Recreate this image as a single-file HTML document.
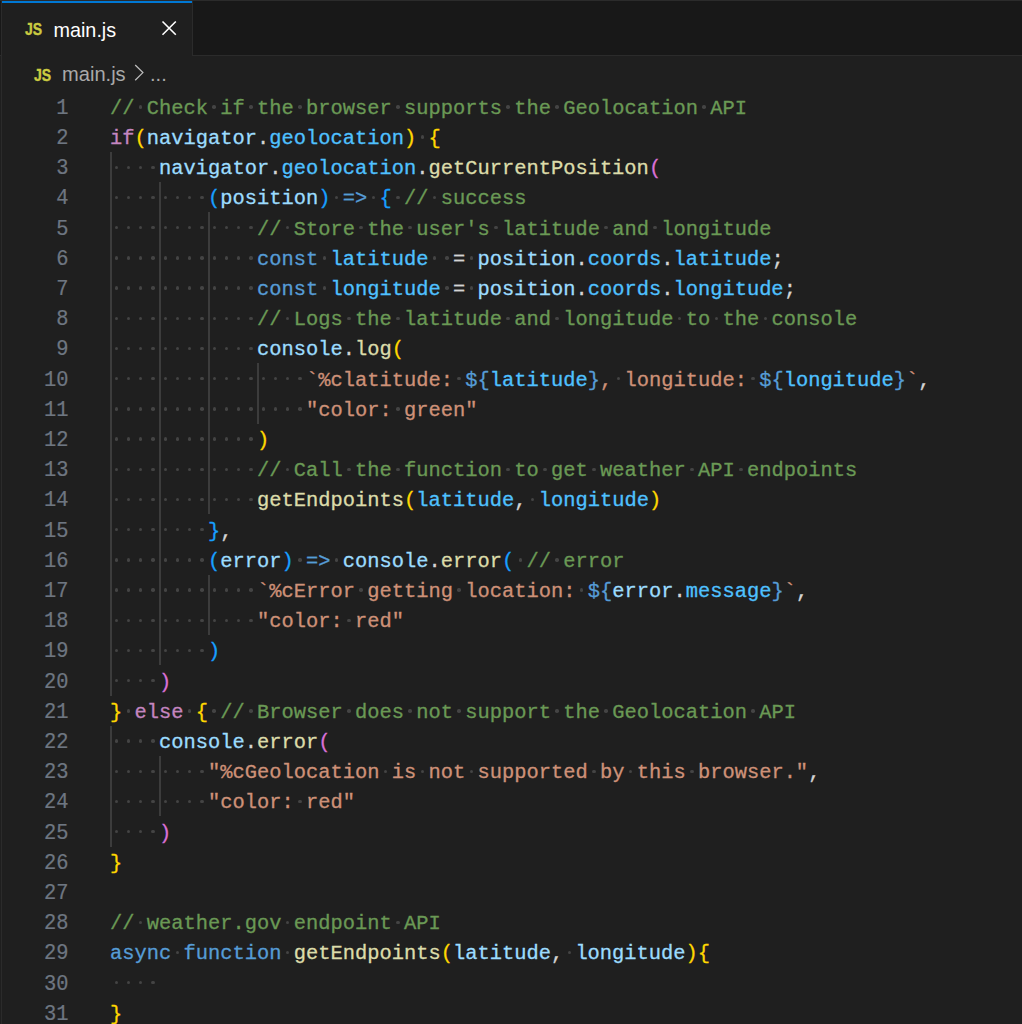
<!DOCTYPE html>
<html><head><meta charset="utf-8"><style>
html,body{margin:0;padding:0;}
body{width:1022px;height:1024px;overflow:hidden;background:#1f1f1f;position:relative;font-family:"Liberation Sans",sans-serif;}
.tabs{position:absolute;left:0;top:0;width:1022px;height:56px;background:#181818;}
.tabs .bt{position:absolute;left:0;top:0;width:1022px;height:1px;background:#2b2b2b}
.tabs .bb{position:absolute;left:0;top:55px;width:1022px;height:1px;background:#2b2b2b}
.lb{position:absolute;left:1px;top:0;width:1px;height:1024px;background:#2b2b2b}
.tab{position:absolute;left:2px;top:1px;width:190px;height:55px;background:#1f1f1f;}
.tab .blue{position:absolute;left:0;top:0;width:190px;height:2px;background:#0078d4}
.tab .rb{position:absolute;left:190px;top:0;width:1px;height:55px;background:#2b2b2b}
.js{position:absolute;font-family:"Liberation Sans",sans-serif;font-weight:bold;color:#cbcb41;}
.tt{position:absolute;color:#ffffff;font-size:19.8px;}
.bc{position:absolute;color:#a9a9a9;font-size:20.1px;}
.ln{position:absolute;left:0;height:30.2px;width:1022px;line-height:30.2px;font-family:"Liberation Mono",monospace;font-size:20.410px;white-space:pre;}
.ln b{position:absolute;right:953.5px;font-weight:normal;color:#6e7681;transform:scaleY(1.08);transform-origin:0 20px;-webkit-text-stroke:0.2px #6e7681;}
.code{position:absolute;left:110.0px;top:0;-webkit-text-stroke:0.3px currentColor;}
.code span{-webkit-text-stroke:0.3px currentColor;}
.code i{font-style:normal;position:relative;}
.code i::after{content:"";position:absolute;left:4.5px;top:8.4px;width:3.4px;height:3.4px;border-radius:50%;background:#444444;}
.gd{position:absolute;width:1.8px;background:#3c3c3c;}
.c{color:#6a9955} .k{color:#c586c0} .b{color:#569cd6} .v{color:#9cdcfe} .p{color:#4fc1ff} .f{color:#dcdcaa}
.s{color:#ce9178} .o{color:#d4d4d4} .y{color:#ffd700} .m{color:#da70d6} .l{color:#179fff}
</style></head><body>
<div class="tabs"><div class="bt"></div><div class="bb"></div></div>
<div class="tab"><div class="blue"></div><div class="rb"></div></div>
<div class="lb"></div>
<div class="js" style="left:25px;top:19.5px;font-size:16.5px;transform:scaleX(0.85);transform-origin:0 0;-webkit-text-stroke:0.4px #cbcb41">JS</div>
<div class="tt" style="left:53.5px;top:18.5px">main.js</div>
<svg style="position:absolute;left:161px;top:20px" width="17" height="17" viewBox="0 0 17 17"><path d="M1.5 1.5 L14.8 14.8 M14.8 1.5 L1.5 14.8" stroke="#ffffff" stroke-width="1.6" fill="none"/></svg>
<div class="js" style="left:34px;top:65.5px;font-size:16.5px;transform:scaleX(0.85);transform-origin:0 0;-webkit-text-stroke:0.4px #cbcb41">JS</div>
<div class="bc" style="left:62px;top:63px">main.js</div>
<svg style="position:absolute;left:134px;top:64px" width="11" height="18" viewBox="0 0 11 18"><path d="M1.2 1.0 L8.9 8.6 L1.2 16.2" stroke="#bdbdbd" stroke-width="1.25" fill="none"/></svg>
<div class="bc" style="left:150px;top:63px">...</div>

<div class="gd" style="left:109.90px;top:152.00px;height:543.60px"></div><div class="gd" style="left:109.90px;top:725.80px;height:120.80px"></div><div class="gd" style="left:158.89px;top:182.20px;height:483.20px"></div><div class="gd" style="left:158.89px;top:756.00px;height:60.40px"></div><div class="gd" style="left:207.88px;top:212.40px;height:302.00px"></div><div class="gd" style="left:207.88px;top:574.80px;height:60.40px"></div><div class="gd" style="left:256.88px;top:363.40px;height:60.40px"></div>
<div class="ln" style="top:93.80px"><b>1</b><div class="code"><span class="c">//<i> </i>Check<i> </i>if<i> </i>the<i> </i>browser<i> </i>supports<i> </i>the<i> </i>Geolocation<i> </i>API</span></div></div><div class="ln" style="top:124.00px"><b>2</b><div class="code"><span class="k">if</span><span class="y">(</span><span class="v">navigator</span><span class="o">.</span><span class="p">geolocation</span><span class="y">)</span><span class="o"><i> </i></span><span class="y">{</span></div></div><div class="ln" style="top:154.20px"><b>3</b><div class="code"><span class="o"><i> </i><i> </i><i> </i><i> </i></span><span class="v">navigator</span><span class="o">.</span><span class="p">geolocation</span><span class="o">.</span><span class="f">getCurrentPosition</span><span class="m">(</span></div></div><div class="ln" style="top:184.40px"><b>4</b><div class="code"><span class="o"><i> </i><i> </i><i> </i><i> </i><i> </i><i> </i><i> </i><i> </i></span><span class="l">(</span><span class="v">position</span><span class="l">)</span><span class="o"><i> </i></span><span class="b">=&gt;</span><span class="o"><i> </i></span><span class="l">{</span><span class="o"><i> </i></span><span class="c">//<i> </i>success</span></div></div><div class="ln" style="top:214.60px"><b>5</b><div class="code"><span class="o"><i> </i><i> </i><i> </i><i> </i><i> </i><i> </i><i> </i><i> </i><i> </i><i> </i><i> </i><i> </i></span><span class="c">//<i> </i>Store<i> </i>the<i> </i>user's<i> </i>latitude<i> </i>and<i> </i>longitude</span></div></div><div class="ln" style="top:244.80px"><b>6</b><div class="code"><span class="o"><i> </i><i> </i><i> </i><i> </i><i> </i><i> </i><i> </i><i> </i><i> </i><i> </i><i> </i><i> </i></span><span class="b">const</span><span class="o"><i> </i></span><span class="p">latitude</span><span class="o"><i> </i><i> </i>=<i> </i></span><span class="v">position</span><span class="o">.</span><span class="p">coords</span><span class="o">.</span><span class="p">latitude</span><span class="o">;</span></div></div><div class="ln" style="top:275.00px"><b>7</b><div class="code"><span class="o"><i> </i><i> </i><i> </i><i> </i><i> </i><i> </i><i> </i><i> </i><i> </i><i> </i><i> </i><i> </i></span><span class="b">const</span><span class="o"><i> </i></span><span class="p">longitude</span><span class="o"><i> </i>=<i> </i></span><span class="v">position</span><span class="o">.</span><span class="p">coords</span><span class="o">.</span><span class="p">longitude</span><span class="o">;</span></div></div><div class="ln" style="top:305.20px"><b>8</b><div class="code"><span class="o"><i> </i><i> </i><i> </i><i> </i><i> </i><i> </i><i> </i><i> </i><i> </i><i> </i><i> </i><i> </i></span><span class="c">//<i> </i>Logs<i> </i>the<i> </i>latitude<i> </i>and<i> </i>longitude<i> </i>to<i> </i>the<i> </i>console</span></div></div><div class="ln" style="top:335.40px"><b>9</b><div class="code"><span class="o"><i> </i><i> </i><i> </i><i> </i><i> </i><i> </i><i> </i><i> </i><i> </i><i> </i><i> </i><i> </i></span><span class="v">console</span><span class="o">.</span><span class="f">log</span><span class="y">(</span></div></div><div class="ln" style="top:365.60px"><b>10</b><div class="code"><span class="o"><i> </i><i> </i><i> </i><i> </i><i> </i><i> </i><i> </i><i> </i><i> </i><i> </i><i> </i><i> </i><i> </i><i> </i><i> </i><i> </i></span><span class="s">`%clatitude:<i> </i></span><span class="b">${</span><span class="p">latitude</span><span class="b">}</span><span class="s">,<i> </i>longitude:<i> </i></span><span class="b">${</span><span class="p">longitude</span><span class="b">}</span><span class="s">`</span><span class="o">,</span></div></div><div class="ln" style="top:395.80px"><b>11</b><div class="code"><span class="o"><i> </i><i> </i><i> </i><i> </i><i> </i><i> </i><i> </i><i> </i><i> </i><i> </i><i> </i><i> </i><i> </i><i> </i><i> </i><i> </i></span><span class="s">"color:<i> </i>green"</span></div></div><div class="ln" style="top:426.00px"><b>12</b><div class="code"><span class="o"><i> </i><i> </i><i> </i><i> </i><i> </i><i> </i><i> </i><i> </i><i> </i><i> </i><i> </i><i> </i></span><span class="y">)</span></div></div><div class="ln" style="top:456.20px"><b>13</b><div class="code"><span class="o"><i> </i><i> </i><i> </i><i> </i><i> </i><i> </i><i> </i><i> </i><i> </i><i> </i><i> </i><i> </i></span><span class="c">//<i> </i>Call<i> </i>the<i> </i>function<i> </i>to<i> </i>get<i> </i>weather<i> </i>API<i> </i>endpoints</span></div></div><div class="ln" style="top:486.40px"><b>14</b><div class="code"><span class="o"><i> </i><i> </i><i> </i><i> </i><i> </i><i> </i><i> </i><i> </i><i> </i><i> </i><i> </i><i> </i></span><span class="f">getEndpoints</span><span class="y">(</span><span class="p">latitude</span><span class="o">,<i> </i></span><span class="p">longitude</span><span class="y">)</span></div></div><div class="ln" style="top:516.60px"><b>15</b><div class="code"><span class="o"><i> </i><i> </i><i> </i><i> </i><i> </i><i> </i><i> </i><i> </i></span><span class="l">}</span><span class="o">,</span></div></div><div class="ln" style="top:546.80px"><b>16</b><div class="code"><span class="o"><i> </i><i> </i><i> </i><i> </i><i> </i><i> </i><i> </i><i> </i></span><span class="l">(</span><span class="v">error</span><span class="l">)</span><span class="o"><i> </i></span><span class="b">=&gt;</span><span class="o"><i> </i></span><span class="v">console</span><span class="o">.</span><span class="f">error</span><span class="l">(</span><span class="o"><i> </i></span><span class="c">//<i> </i>error</span></div></div><div class="ln" style="top:577.00px"><b>17</b><div class="code"><span class="o"><i> </i><i> </i><i> </i><i> </i><i> </i><i> </i><i> </i><i> </i><i> </i><i> </i><i> </i><i> </i></span><span class="s">`%cError<i> </i>getting<i> </i>location:<i> </i></span><span class="b">${</span><span class="v">error</span><span class="o">.</span><span class="p">message</span><span class="b">}</span><span class="s">`</span><span class="o">,</span></div></div><div class="ln" style="top:607.20px"><b>18</b><div class="code"><span class="o"><i> </i><i> </i><i> </i><i> </i><i> </i><i> </i><i> </i><i> </i><i> </i><i> </i><i> </i><i> </i></span><span class="s">"color:<i> </i>red"</span></div></div><div class="ln" style="top:637.40px"><b>19</b><div class="code"><span class="o"><i> </i><i> </i><i> </i><i> </i><i> </i><i> </i><i> </i><i> </i></span><span class="l">)</span></div></div><div class="ln" style="top:667.60px"><b>20</b><div class="code"><span class="o"><i> </i><i> </i><i> </i><i> </i></span><span class="m">)</span></div></div><div class="ln" style="top:697.80px"><b>21</b><div class="code"><span class="y">}</span><span class="o"><i> </i></span><span class="k">else</span><span class="o"><i> </i></span><span class="y">{</span><span class="o"><i> </i></span><span class="c">//<i> </i>Browser<i> </i>does<i> </i>not<i> </i>support<i> </i>the<i> </i>Geolocation<i> </i>API</span></div></div><div class="ln" style="top:728.00px"><b>22</b><div class="code"><span class="o"><i> </i><i> </i><i> </i><i> </i></span><span class="v">console</span><span class="o">.</span><span class="f">error</span><span class="m">(</span></div></div><div class="ln" style="top:758.20px"><b>23</b><div class="code"><span class="o"><i> </i><i> </i><i> </i><i> </i><i> </i><i> </i><i> </i><i> </i></span><span class="s">"%cGeolocation<i> </i>is<i> </i>not<i> </i>supported<i> </i>by<i> </i>this<i> </i>browser."</span><span class="o">,</span></div></div><div class="ln" style="top:788.40px"><b>24</b><div class="code"><span class="o"><i> </i><i> </i><i> </i><i> </i><i> </i><i> </i><i> </i><i> </i></span><span class="s">"color:<i> </i>red"</span></div></div><div class="ln" style="top:818.60px"><b>25</b><div class="code"><span class="o"><i> </i><i> </i><i> </i><i> </i></span><span class="m">)</span></div></div><div class="ln" style="top:848.80px"><b>26</b><div class="code"><span class="y">}</span></div></div><div class="ln" style="top:879.00px"><b>27</b><div class="code"></div></div><div class="ln" style="top:909.20px"><b>28</b><div class="code"><span class="c">//<i> </i>weather.gov<i> </i>endpoint<i> </i>API</span></div></div><div class="ln" style="top:939.40px"><b>29</b><div class="code"><span class="b">async</span><span class="o"><i> </i></span><span class="b">function</span><span class="o"><i> </i></span><span class="f">getEndpoints</span><span class="y">(</span><span class="v">latitude</span><span class="o">,<i> </i></span><span class="v">longitude</span><span class="y">)</span><span class="y">{</span></div></div><div class="ln" style="top:969.60px"><b>30</b><div class="code"><span class="o"><i> </i><i> </i><i> </i><i> </i></span></div></div><div class="ln" style="top:999.80px"><b>31</b><div class="code"><span class="y">}</span></div></div>
</body></html>
